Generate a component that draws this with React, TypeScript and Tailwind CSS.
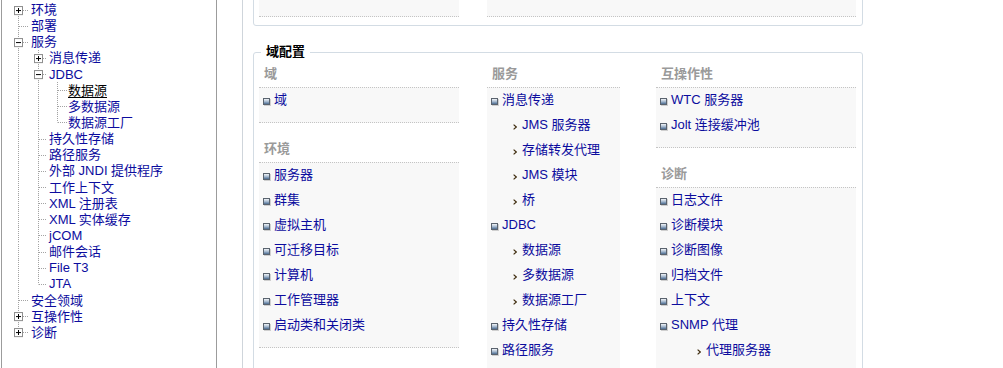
import type { ReactNode } from 'react';

interface TreeNode {
  label: string;
  open?: boolean;
  collapsed?: boolean;
  selected?: boolean;
  children?: TreeNode[];
}

interface FlatRow {
  node: TreeNode;
  level: number;
  first: boolean;
  last: boolean;
  pass: boolean[];
}

const tree: TreeNode[] = [
  { label: '环境', collapsed: true },
  { label: '部署' },
  {
    label: '服务',
    open: true,
    children: [
      { label: '消息传递', collapsed: true },
      {
        label: 'JDBC',
        open: true,
        children: [{ label: '数据源', selected: true }, { label: '多数据源' }, { label: '数据源工厂' }],
      },
      { label: '持久性存储' },
      { label: '路径服务' },
      { label: '外部 JNDI 提供程序' },
      { label: '工作上下文' },
      { label: 'XML 注册表' },
      { label: 'XML 实体缓存' },
      { label: 'jCOM' },
      { label: '邮件会话' },
      { label: 'File T3' },
      { label: 'JTA' },
    ],
  },
  { label: '安全领域' },
  { label: '互操作性', collapsed: true },
  { label: '诊断', collapsed: true },
];

function flatten(nodes: TreeNode[], level: number, pass: boolean[], out: FlatRow[]) {
  nodes.forEach((node, i) => {
    const last = i === nodes.length - 1;
    out.push({ node, level, first: level === 0 && i === 0, last, pass });
    if (node.open && node.children) flatten(node.children, level + 1, [...pass, !last], out);
  });
  return out;
}

const rows = flatten(tree, 0, [], []);

// cell widths per level, so the guide lines land where the old console draws them
const cellWidth = [20, 19, 20];
const textGap = ['ml-[3px]', 'ml-[2px]', 'ml-[1px]'];

const dot = { stroke: '#a3a3a3', strokeWidth: 1, strokeDasharray: '1 1' };

function Connector({ w, first, last, sign }: { w: number; first: boolean; last: boolean; sign?: '+' | '-' }) {
  return (
    <svg width={w} height="100%" viewBox={`0 0 ${w} 16`} preserveAspectRatio="none" className="shrink-0">
      <line x1={10.5} y1={first ? 8 : 0} x2={10.5} y2={last ? 8.5 : 16} {...dot} />
      <line x1={11} y1={8.5} x2={w} y2={8.5} {...dot} />
      {sign && (
        <>
          <rect x={6.5} y={4.5} width={8} height={8} fill="#ffffff" stroke="#8e8e8e" />
          <line x1={8} y1={8.5} x2={13} y2={8.5} stroke="#000000" />
          {sign === '+' && <line x1={10.5} y1={6} x2={10.5} y2={11} stroke="#000000" />}
        </>
      )}
    </svg>
  );
}

function Pass({ w, on }: { w: number; on: boolean }) {
  return (
    <svg width={w} height="100%" viewBox={`0 0 ${w} 16`} preserveAspectRatio="none" className="shrink-0">
      {on && <line x1={10.5} y1={0} x2={10.5} y2={16} {...dot} />}
    </svg>
  );
}

function Tree() {
  return (
    <div className="pl-[6px] pt-[1.5px]">
      {rows.map((r, i) => (
        <div key={i} className="flex h-[16.15px] items-stretch">
          {r.pass.map((on, j) => (
            <Pass key={j} w={r.level === 2 && j === 1 ? 19 : cellWidth[j]} on={on} />
          ))}
          <Connector
            w={cellWidth[r.level]}
            first={r.first}
            last={r.last}
            sign={r.node.open ? '-' : r.node.collapsed ? '+' : undefined}
          />
          <span
            className={`${textGap[r.level]} flex items-center whitespace-nowrap text-[13px] leading-none ${
              r.node.selected ? 'text-black underline underline-offset-2' : 'text-[#0c0c9e]'
            }`}
          >
            {r.node.label}
          </span>
        </div>
      ))}
    </div>
  );
}

type Item = { label: string; depth?: 0 | 1 | 2 };
type Section = { title: string; items: Item[] };

const columns: { width: string; gap: string; sections: Section[] }[] = [
  {
    width: 'w-[200px]',
    gap: '',
    sections: [
      { title: '域', items: [{ label: '域' }] },
      {
        title: '环境',
        items: [
          { label: '服务器' },
          { label: '群集' },
          { label: '虚拟主机' },
          { label: '可迁移目标' },
          { label: '计算机' },
          { label: '工作管理器' },
          { label: '启动类和关闭类' },
        ],
      },
    ],
  },
  {
    width: 'w-[133px]',
    gap: 'ml-[28px]',
    sections: [
      {
        title: '服务',
        items: [
          { label: '消息传递' },
          { label: 'JMS 服务器', depth: 1 },
          { label: '存储转发代理', depth: 1 },
          { label: 'JMS 模块', depth: 1 },
          { label: '桥', depth: 1 },
          { label: 'JDBC' },
          { label: '数据源', depth: 1 },
          { label: '多数据源', depth: 1 },
          { label: '数据源工厂', depth: 1 },
          { label: '持久性存储' },
          { label: '路径服务' },
          { label: '外部 JNDI 提供程序' },
          { label: '工作上下文' },
        ],
      },
    ],
  },
  {
    width: 'w-[200px]',
    gap: 'ml-[36px]',
    sections: [
      { title: '互操作性', items: [{ label: 'WTC 服务器' }, { label: 'Jolt 连接缓冲池' }] },
      {
        title: '诊断',
        items: [
          { label: '日志文件' },
          { label: '诊断模块' },
          { label: '诊断图像' },
          { label: '归档文件' },
          { label: '上下文' },
          { label: 'SNMP 代理' },
          { label: '代理服务器', depth: 2 },
          { label: '代理服务器' },
        ],
      },
    ],
  },
];

function Bullet() {
  return (
    <span className="inline-block h-[7px] w-[7px] shrink-0 translate-y-[1px] border border-[#5a636e] bg-linear-to-b from-[#f2f5f8] via-[#a8bbd0] to-[#4d6d92] shadow-[1px_1px_0_#cfcfcf]" />
  );
}

function Arrow() {
  return (
    <svg width="4" height="6" viewBox="0 0 4 6" className="shrink-0 translate-y-[1px]">
      <path d="M0.6 0.6 L3.3 3 L0.6 5.4" fill="none" stroke="#3f2c0e" strokeWidth="1.2" />
    </svg>
  );
}

function ItemRow({ item }: { item: Item }) {
  const depth = item.depth ?? 0;
  const pad = depth === 0 ? 'pl-[4px] gap-[4px]' : depth === 1 ? 'pl-[26px] gap-[5px]' : 'pl-[41px] gap-[5px]';
  return (
    <div className={`flex h-[25px] items-center ${pad}`}>
      {depth === 0 ? <Bullet /> : <Arrow />}
      <span className="-translate-y-[1px] whitespace-nowrap text-[13px] leading-none text-[#0c0c9e]">
        {item.label}
      </span>
    </div>
  );
}

function Box({ children, className = '' }: { children: ReactNode; className?: string }) {
  return (
    <div className={`border-y border-dotted border-[#c4c4c4] bg-[#f8f8f8] ${className}`}>{children}</div>
  );
}

function SectionBlock({ section, first }: { section: Section; first: boolean }) {
  return (
    <div className={first ? '' : 'mt-[13px]'}>
      <div className="flex h-[26px] items-center pb-[2px] pl-[5px] text-[13px] font-bold leading-none text-[#9a9a9a]">
        {section.title}
      </div>
      <Box className="pb-[9px]">
        {section.items.map((it, i) => (
          <ItemRow key={i} item={it} />
        ))}
      </Box>
    </div>
  );
}

export default function App() {
  return (
    <div className="flex h-screen overflow-hidden bg-white font-['Liberation_Sans','Noto_Sans_CJK_SC',sans-serif]">
      <aside className="ml-px w-[216px] shrink-0 border-x border-[#9c9c9c]">
        <Tree />
      </aside>

      <main className="ml-[25px] min-w-0 flex-1 border-l border-[#cfd5db] pl-[10px]">
        {/* tail of the section above, scrolled mostly out of view */}
        <div className="-mt-[10px] h-[36px] w-[610px] rounded-[3px] border border-[#d3dce4] pl-[5px]">
          <div className="flex">
            <div className="h-[26px] w-[200px] border-b border-dotted border-[#c4c4c4] bg-[#f8f8f8]" />
            <div className="ml-[28px] h-[26px] w-[369px] overflow-hidden border-b border-dotted border-[#c4c4c4] bg-[#f8f8f8]">
              <div className="-mt-[9px]">
                <ItemRow item={{ label: '工作上下文' }} />
              </div>
            </div>
          </div>
        </div>

        <fieldset className="mt-[18px] w-[610px] rounded-[3px] border border-[#d3dce4] pl-[5px] pt-[1px]">
          <legend className="ml-[2px] px-[5px] text-[13px] font-bold leading-[16px] text-black">域配置</legend>
          <div className="flex items-start">
            {columns.map((col, ci) => (
              <div key={ci} className={`${col.width} ${col.gap} shrink-0`}>
                {col.sections.map((s, si) => (
                  <SectionBlock key={si} section={s} first={si === 0} />
                ))}
              </div>
            ))}
          </div>
        </fieldset>
      </main>
    </div>
  );
}
